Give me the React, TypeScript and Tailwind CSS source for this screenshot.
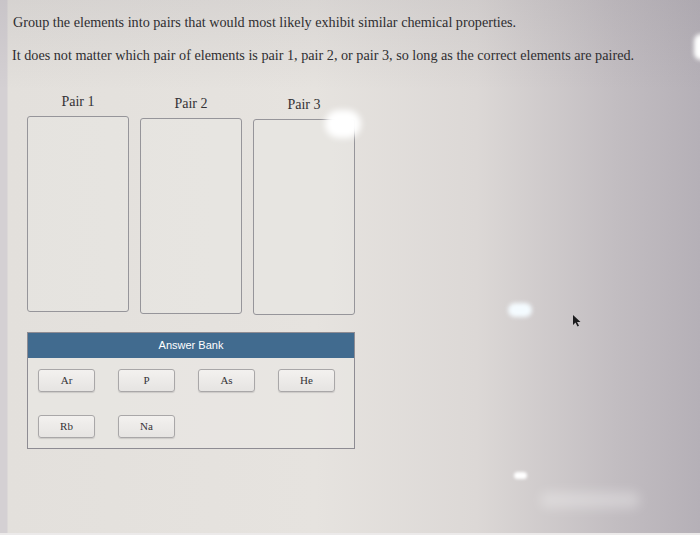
import React from "react";

const bank: string[][] = [
  ["Ar", "P", "As", "He"],
  ["Rb", "Na"],
];

function Chip({ label }: { label: string }) {
  return (
    <div className="w-[57px] h-[23px] flex items-center justify-center rounded-[3px] border border-[#a9a7a8] bg-[linear-gradient(#f3f1ef,#e6e4e2)] shadow-[0_1px_1px_rgba(0,0,0,0.12)] text-[11px] text-[#343336] [font-family:'Liberation_Serif',serif]">
      {label}
    </div>
  );
}

function PairColumn({ label, offset }: { label: string; offset: string }) {
  return (
    <div className={`flex flex-col items-center w-[102px] ${offset}`}>
      <div className="h-[18px] text-[14px] leading-[18px] text-[#333235]">{label}</div>
      <div className="mt-[5px] w-full h-[196px] rounded-[3px] border-[1.5px] border-[#96959a] bg-[#ecebe8]/30" />
    </div>
  );
}

export default function App() {
  return (
    <div className="relative w-[700px] h-[535px] overflow-hidden bg-[linear-gradient(90deg,#d4d0d3_0px,#d4d0d3_7px,#e3e0dc_8px,#e6e3df_45%,#dcd8d6_68%,#c2bdc1_88%,#b5b0b7_100%)] [font-family:'Liberation_Serif',serif]">
      {/* top shading */}
      <div className="absolute inset-x-0 top-0 h-[90px] bg-[linear-gradient(180deg,rgba(120,115,125,0.12),rgba(120,115,125,0))] pointer-events-none" />

      <div className="relative pl-[13px] pt-[12px]">
        <p className="text-[14.2px] leading-[20px] text-[#2f2e31]">
          Group the elements into pairs that would most likely exhibit similar chemical properties.
        </p>
        <p className="mt-[13px] -ml-[1px] text-[14.2px] leading-[20px] text-[#2f2e31]">
          It does not matter which pair of elements is pair 1, pair 2, or pair 3, so long as the correct elements are paired.
        </p>

        <div className="mt-[28px] ml-[14px] flex gap-[11px]">
          <PairColumn label="Pair 1" offset="" />
          <PairColumn label="Pair 2" offset="mt-[2px]" />
          <PairColumn label="Pair 3" offset="mt-[3px]" />
        </div>

        <div className="mt-[17px] ml-[14px] w-[328px] h-[117px] border border-[#8e8c93] bg-[#eae8e5]/60 flex flex-col">
          <div className="h-[25px] bg-[#416b8f] flex items-center justify-center text-white text-[11px] [font-family:'Liberation_Sans',Arial,sans-serif]">
            Answer Bank
          </div>
          <div className="flex flex-col gap-[23px] pl-[10px] pt-[11px]">
            {bank.map((row, i) => (
              <div key={i} className="flex gap-[23px]">
                {row.map((el) => (
                  <Chip key={el} label={el} />
                ))}
              </div>
            ))}
          </div>
        </div>
      </div>

      {/* glare from room lights */}
      <div className="absolute left-[325px] top-[110px] w-[36px] h-[28px] rounded-full bg-white blur-[3px]" />
      <div className="absolute left-[508px] top-[303px] w-[24px] h-[14px] rounded-full bg-[#f4fbff] blur-[2px]" />
      <div className="absolute left-[514px] top-[472px] w-[13px] h-[7px] rounded-full bg-white blur-[1.5px]" />
      <div className="absolute left-[540px] top-[492px] w-[100px] h-[16px] rounded-full bg-white/30 blur-[6px]" />
      <div className="absolute left-[694px] top-[34px] w-[14px] h-[26px] rounded-full bg-white blur-[2px]" />

      {/* mouse pointer */}
      <svg className="absolute left-[572px] top-[314px]" width="10" height="14" viewBox="0 0 10 14">
        <path d="M1 1 L1 11 L3.5 8.5 L5.5 12.5 L7 11.8 L5 8 L8.5 8 Z" fill="#1c1c1e" />
      </svg>

      {/* bottom bezel line */}
      <div className="absolute inset-x-0 bottom-0 h-[2px] bg-[#eceaea]" />
    </div>
  );
}
